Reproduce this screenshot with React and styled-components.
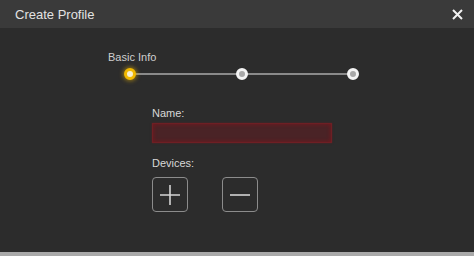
import React from 'react'
import styled, { createGlobalStyle } from 'styled-components'

const Global = createGlobalStyle`
  html, body { margin: 0; padding: 0; background: #2b2b2b; }
  body { font-family: Arial, "Liberation Sans", sans-serif; }
`

const Dialog = styled.div({
  width: 474,
  height: 256,
  background: '#2c2c2c',
  display: 'flex',
  flexDirection: 'column',
  boxSizing: 'border-box',
  borderBottom: '4px solid #a9a9a9',
})

const Header = styled.div({
  height: 28,
  background: '#3a3a3a',
  display: 'flex',
  alignItems: 'center',
  justifyContent: 'space-between',
  padding: '0 9px 0 15px',
  color: '#e2e2e2',
  fontSize: 13,
  flexShrink: 0,
})

const Close = styled.button({
  background: 'none',
  border: 'none',
  padding: 0,
  width: 16,
  height: 16,
  display: 'flex',
  alignItems: 'center',
  justifyContent: 'center',
  cursor: 'pointer',
})

const Body = styled.div({
  flex: 1,
  display: 'flex',
  flexDirection: 'column',
  paddingTop: 23,
})

const StepLabel = styled.div({
  marginLeft: 108,
  color: '#cfcfcf',
  fontSize: 11,
  height: 13,
})

const Stepper = styled.div({
  marginLeft: 124,
  marginTop: 4,
  width: 235,
  height: 12,
  display: 'flex',
  alignItems: 'center',
  justifyContent: 'space-between',
  position: 'relative',
  '&::before': {
    content: '""',
    position: 'absolute',
    left: 6,
    right: 6,
    top: 5,
    height: 2,
    background: '#8a8a8a',
  },
})

const Dot = styled.span(({ active }) => ({
  width: 12,
  height: 12,
  borderRadius: '50%',
  boxSizing: 'border-box',
  background: active ? '#f7f0d0' : '#a8a8a8',
  border: `3px solid ${active ? '#f0b800' : '#f4f4f4'}`,
  boxShadow: active ? '0 0 4px 1px rgba(240,184,0,0.55)' : 'none',
  position: 'relative',
  zIndex: 1,
}))

const Form = styled.div({
  marginLeft: 152,
  marginTop: 27,
  display: 'flex',
  flexDirection: 'column',
})

const Label = styled.label({
  color: '#d8d8d8',
  fontSize: 11,
  height: 13,
})

const Input = styled.input({
  marginTop: 3,
  width: 180,
  height: 20,
  boxSizing: 'border-box',
  background: '#4a2326',
  border: '1px solid #6e1f24',
  boxShadow: 'inset 0 0 4px rgba(130,20,28,0.9), 0 0 2px rgba(130,20,28,0.5)',
  outline: 'none',
  marginBottom: 14,
})

const Buttons = styled.div({
  marginTop: 7,
  display: 'flex',
  gap: 34,
})

const IconButton = styled.button({
  width: 36,
  height: 35,
  boxSizing: 'border-box',
  background: 'transparent',
  border: '1px solid #8c8c8c',
  borderRadius: 4,
  padding: 0,
  display: 'flex',
  alignItems: 'center',
  justifyContent: 'center',
})

export default function App() {
  return (
    <>
      <Global />
      <Dialog>
        <Header>
          <span>Create Profile</span>
          <Close aria-label="close">
            <svg width="11" height="11" viewBox="0 0 11 11">
              <path d="M1 1L10 10M10 1L1 10" stroke="#f2f2f2" strokeWidth="2" />
            </svg>
          </Close>
        </Header>
        <Body>
          <StepLabel>Basic Info</StepLabel>
          <Stepper>
            <Dot active />
            <Dot />
            <Dot />
          </Stepper>
          <Form>
            <Label>Name:</Label>
            <Input />
            <Label>Devices:</Label>
            <Buttons>
              <IconButton aria-label="add">
                <svg width="22" height="22" viewBox="0 0 22 22">
                  <path d="M11 1V21M1 11H21" stroke="#d4d4d4" strokeWidth="1.6" />
                </svg>
              </IconButton>
              <IconButton aria-label="remove">
                <svg width="22" height="22" viewBox="0 0 22 22">
                  <path d="M1 11H21" stroke="#d4d4d4" strokeWidth="1.6" />
                </svg>
              </IconButton>
            </Buttons>
          </Form>
        </Body>
      </Dialog>
    </>
  )
}
